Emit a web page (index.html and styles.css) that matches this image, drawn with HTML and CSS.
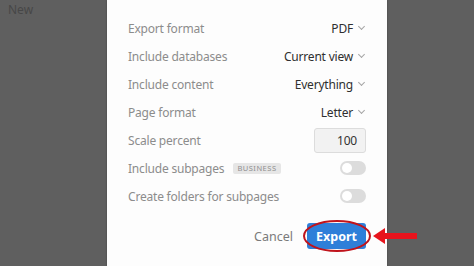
FILE: index.html
```html
<!DOCTYPE html>
<html lang="en">
<head>
    <meta charset="UTF-8">
    <title>Export</title>
    <link rel="stylesheet" href="styles.css">
</head>
<body>
    <div class="page">
        <div class="sidebar">New</div>

        <!-- Export dialog -->
        <div class="panel">
            <div class="row">
                <span class="label">Export format</span>
                <span class="select">PDF <i class="chev"></i></span>
            </div>
            <div class="row">
                <span class="label">Include databases</span>
                <span class="select">Current view <i class="chev"></i></span>
            </div>
            <div class="row">
                <span class="label">Include content</span>
                <span class="select">Everything <i class="chev"></i></span>
            </div>
            <div class="row">
                <span class="label">Page format</span>
                <span class="select">Letter <i class="chev"></i></span>
            </div>
            <div class="row">
                <span class="label">Scale percent</span>
                <span class="input">100</span>
            </div>
            <div class="row">
                <span class="label">Include subpages <span class="badge">BUSINESS</span></span>
                <span class="toggle"></span>
            </div>
            <div class="row">
                <span class="label">Create folders for subpages</span>
                <span class="toggle"></span>
            </div>

            <div class="footer">
                <button class="cancel">Cancel</button>
                <button class="export">Export</button>
            </div>

            <!-- annotation -->
            <svg class="mark" width="120" height="40" viewBox="0 0 120 40">
                <ellipse cx="34" cy="18" rx="33" ry="15" fill="none" stroke="#c0141c" stroke-width="2"/>
                <polygon points="70,18 82,10 82,15 114,15 114,21 82,21 82,26" fill="#e8141c"/>
            </svg>
        </div>
        <div class="rest"></div>
    </div>
</body>
</html>
```

FILE: styles.css
```css
body {
    margin: 0;
    font-family: "Noto Sans", "Open Sans", sans-serif;
    background: #5f5f5f;
}

.page {
    display: flex;
    height: 266px;
    overflow: hidden;
}

.sidebar {
    width: 99px;
    padding: 1px 0 0 8px;
    font-size: 12px;
    color: #474747;
}

.panel {
    position: relative;
    width: 238px;
    padding: 14px 21px 0 21px;
    background: #fdfdfd;
    box-shadow: 0 0 2px rgba(0, 0, 0, 0.3);
}

.rest {
    flex: 1;
}

.row {
    display: flex;
    justify-content: space-between;
    align-items: center;
    height: 28px;
    font-size: 12px;
    letter-spacing: -0.2px;
}

.label {
    color: #8c8c8c;
    display: flex;
    align-items: center;
}

.select {
    color: #2f2f2f;
    display: flex;
    align-items: center;
}

.chev {
    display: inline-block;
    width: 4px;
    height: 4px;
    margin: -3px 2px 0 6px;
    border-right: 1px solid #a6a6a6;
    border-bottom: 1px solid #a6a6a6;
    transform: rotate(45deg);
}

.input {
    width: 42px;
    height: 23px;
    line-height: 23px;
    padding-right: 8px;
    text-align: right;
    color: #333;
    background: #f2f2f2;
    border: 1px solid #dcdcdc;
    border-radius: 3px;
}

.badge {
    margin-left: 9px;
    padding: 0 4px;
    font-size: 7.5px;
    line-height: 11px;
    letter-spacing: 0.5px;
    color: #8f8f8f;
    background: #e6e6e6;
    border-radius: 2px;
}

.toggle {
    position: relative;
    width: 26px;
    height: 14px;
    border-radius: 7px;
    background: #dcdcdc;
}

.toggle::after {
    content: "";
    position: absolute;
    left: 2px;
    top: 2px;
    width: 10px;
    height: 10px;
    border-radius: 50%;
    background: #fff;
}

.footer {
    display: flex;
    justify-content: flex-end;
    align-items: center;
    gap: 14px;
    margin-top: 13px;
}

button {
    font-family: inherit;
    font-size: 12.5px;
    border: none;
    cursor: pointer;
}

.cancel {
    background: none;
    color: #7a7a7a;
    padding: 0;
}

.export {
    width: 59px;
    height: 26px;
    border-radius: 3px;
    background: #2e7fd9;
    color: #fff;
    font-weight: bold;
}

.mark {
    position: absolute;
    left: 196px;
    top: 218px;
}
```
